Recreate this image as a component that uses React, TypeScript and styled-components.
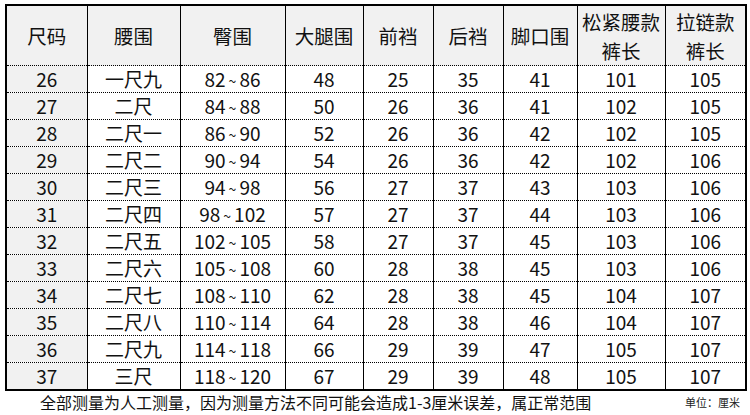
import React from "react";
import styled, { createGlobalStyle } from "styled-components";

const Global = createGlobalStyle`
  html, body { margin: 0; padding: 0; background: #ffffff; }
  body { font-family: "Noto Sans CJK SC", "Noto Sans", sans-serif; color: #111; }
`;

const Page = styled.div`
  width: 750px;
  height: 415px;
  box-sizing: border-box;
  padding: 4px 5px 0 5px;
  display: flex;
  flex-direction: column;
  overflow: hidden;
`;

const Table = styled.table`
  width: 740px;
  border-collapse: collapse;
  table-layout: fixed;
  border: 2px solid #000;
  box-sizing: border-box;
`;

const HeadCell = styled.th`
  height: 59px;
  padding: 0;
  background: #f1f1f1;
  font-weight: 400;
  font-size: 19.5px;
  line-height: 29px;
  text-align: center;
  border-left: 1px solid #000;
  border-bottom: 1px dotted #000;
  color: #111;
`;

const Cell = styled.td<{ $shade?: boolean }>`
  height: 26px;
  padding: 0;
  font-size: 19px;
  line-height: 26px;
  text-align: center;
  border-left: 1px solid #000;
  border-top: 1px dotted #000;
  background: ${(p) => (p.$shade ? "#f1f1f1" : "#fff")};
  color: #111;
  white-space: nowrap;
  overflow: hidden;
`;

const Footer = styled.div`
  display: flex;
  justify-content: space-between;
  align-items: flex-start;
  padding: 1px 5px 0 35px;
`;

const Note = styled.span`
  font-size: 16px;
  line-height: 20px;
  color: #111;
`;

const Unit = styled.span`
  font-size: 11px;
  line-height: 14px;
  padding-top: 3px;
  color: #222;
`;

const Tilde = styled.span`
  font-size: 14px;
  line-height: 0;
  margin: 0 3px;
`;

const widths = [81, 93, 105, 78, 70, 70, 74, 88, 81];

const headers: string[][] = [
  ["尺码"],
  ["腰围"],
  ["臀围"],
  ["大腿围"],
  ["前裆"],
  ["后裆"],
  ["脚口围"],
  ["松紧腰款", "裤长"],
  ["拉链款", "裤长"],
];

const rows: string[][] = [
  ["26", "一尺九", "82~86", "48", "25", "35", "41", "101", "105"],
  ["27", "二尺", "84~88", "50", "26", "36", "41", "102", "105"],
  ["28", "二尺一", "86~90", "52", "26", "36", "42", "102", "105"],
  ["29", "二尺二", "90~94", "54", "26", "36", "42", "102", "106"],
  ["30", "二尺三", "94~98", "56", "27", "37", "43", "103", "106"],
  ["31", "二尺四", "98~102", "57", "27", "37", "44", "103", "106"],
  ["32", "二尺五", "102~105", "58", "27", "37", "45", "103", "106"],
  ["33", "二尺六", "105~108", "60", "28", "38", "45", "103", "106"],
  ["34", "二尺七", "108~110", "62", "28", "38", "45", "104", "107"],
  ["35", "二尺八", "110~114", "64", "28", "38", "46", "104", "107"],
  ["36", "二尺九", "114~118", "66", "29", "39", "47", "105", "107"],
  ["37", "三尺", "118~120", "67", "29", "39", "48", "105", "107"],
];

const renderRange = (v: string) => {
  const parts = v.split("~");
  if (parts.length < 2) return v;
  return (
    <>
      {parts[0]}
      <Tilde>~</Tilde>
      {parts[1]}
    </>
  );
};

export default function App() {
  return (
    <Page>
      <Global />
      <Table>
        <colgroup>
          {widths.map((w, i) => (
            <col key={i} style={{ width: w }} />
          ))}
        </colgroup>
        <thead>
          <tr>
            {headers.map((h, i) => (
              <HeadCell key={i}>
                {h.map((line, j) => (
                  <div key={j}>{line}</div>
                ))}
              </HeadCell>
            ))}
          </tr>
        </thead>
        <tbody>
          {rows.map((r, i) => (
            <tr key={i}>
              {r.map((c, j) => (
                <Cell key={j} $shade={j === 0}>
                  {j === 2 ? renderRange(c) : c}
                </Cell>
              ))}
            </tr>
          ))}
        </tbody>
      </Table>
      <Footer>
        <Note>全部测量为人工测量，因为测量方法不同可能会造成1-3厘米误差，属正常范围</Note>
        <Unit>单位：厘米</Unit>
      </Footer>
    </Page>
  );
}
